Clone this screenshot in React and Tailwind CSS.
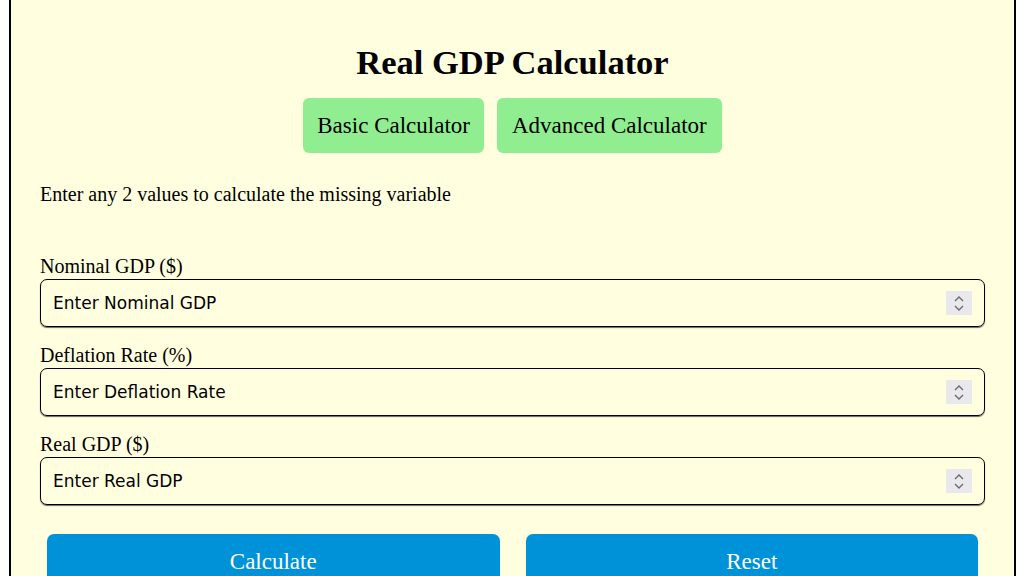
import React from "react";

const fields = [
  { label: "Nominal GDP ($)", placeholder: "Enter Nominal GDP" },
  { label: "Deflation Rate (%)", placeholder: "Enter Deflation Rate" },
  { label: "Real GDP ($)", placeholder: "Enter Real GDP" },
];

function Spinner() {
  return (
    <div className="w-[26px] h-[24px] bg-[#e9e9ed] flex flex-col items-center justify-center gap-[3px] mr-[12px]">
      <svg width="10" height="6" viewBox="0 0 10 6" fill="none">
        <path d="M1 5 L5 1 L9 5" stroke="#6b6b6b" strokeWidth="1.4" />
      </svg>
      <svg width="10" height="6" viewBox="0 0 10 6" fill="none">
        <path d="M1 1 L5 5 L9 1" stroke="#6b6b6b" strokeWidth="1.4" />
      </svg>
    </div>
  );
}

export default function App() {
  return (
    <div className="min-h-screen bg-white font-['Liberation_Serif',serif] text-black">
      <div className="ml-[9px] w-[1007px] min-h-screen border-x-2 border-black bg-[#ffffe0] px-[29px] pt-[43px] pb-10">
        <h1 className="text-center text-[34.5px] leading-[38px] font-bold">Real GDP Calculator</h1>

        {/* tabs */}
        <div className="flex justify-center gap-[13px] mt-[17px]">
          <button className="bg-[#90ee90] rounded-[6px] px-[14px] pt-[2px] h-[55px] text-[23px]">Basic Calculator</button>
          <button className="bg-[#90ee90] rounded-[6px] px-[15px] pt-[2px] h-[55px] text-[23px]">Advanced Calculator</button>
        </div>

        <p className="mt-[30px] text-[20px] leading-[22px]">Enter any 2 values to calculate the missing variable</p>

        <div className="mt-[50px] flex flex-col gap-[17px]">
          {fields.map((f) => (
            <div key={f.label}>
              <label className="block text-[20px] leading-[22px] mb-[2px]">{f.label}</label>
              <div className="flex items-center h-[48px] border border-black rounded-[7px] shadow-[0_1px_1px_#666]">
                <input
                  type="text"
                  placeholder={f.placeholder}
                  className="flex-1 min-w-0 bg-transparent outline-none pl-[12px] pt-[2px] font-['DejaVu_Sans',sans-serif] text-[17px] placeholder:text-black"
                />
                <Spinner />
              </div>
            </div>
          ))}
        </div>

        <div className="flex gap-[26px] mx-[7px] mt-[29px]">
          <button className="flex-1 h-[55px] bg-[#0092d9] rounded-[7px] pt-[2px] text-white text-[23px]">Calculate</button>
          <button className="flex-1 h-[55px] bg-[#0092d9] rounded-[7px] pt-[2px] text-white text-[23px]">Reset</button>
        </div>
      </div>
    </div>
  );
}
